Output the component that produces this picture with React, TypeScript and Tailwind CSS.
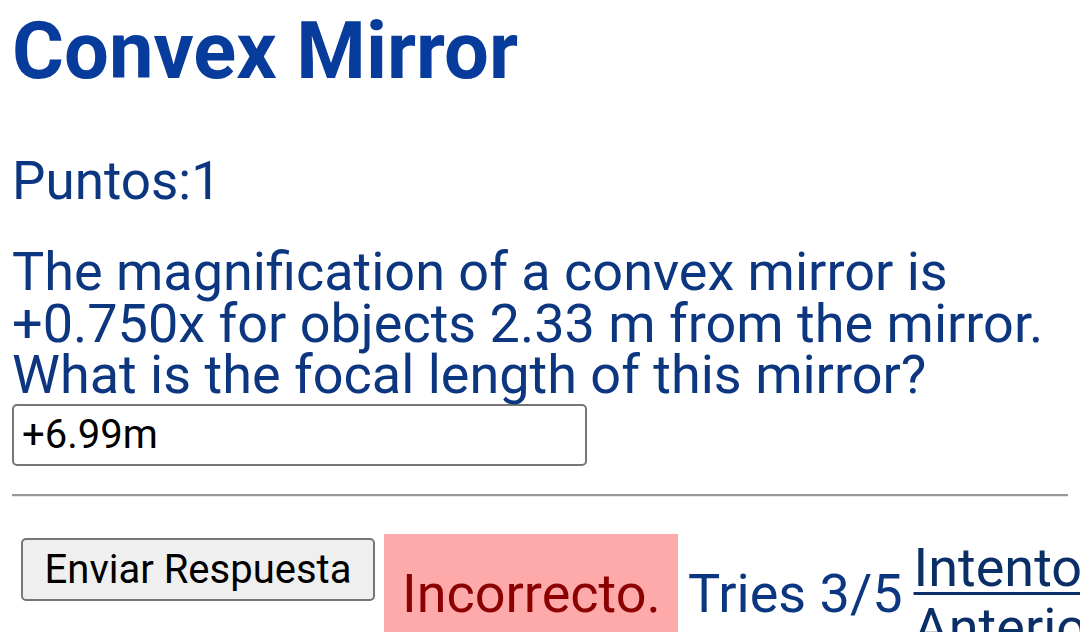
export default function App() {
  return (
    <div className="w-[1080px] h-[632px] overflow-hidden bg-white font-['Roboto',sans-serif]">
      <div className="w-[1056px] ml-3">
        <h1 className="mt-[11px] text-[79.5px] leading-none font-bold text-[#073b9c]">Convex Mirror</h1>
        <p className="mt-[64.5px] text-[53px] leading-none text-[#0c3680]">Puntos:1</p>
        <p className="mt-[38px] text-[54px] leading-[51.5px] text-[#0c3680]">
          The magnification of a convex mirror is
          <br />
          +0.750x for objects 2.33 m from the mirror.
          <br />
          What is the focal length of this mirror?
        </p>
        <input
          type="text"
          defaultValue="+6.99m"
          className="block mt-[3px] w-[575px] h-[62px] px-[8px] border-2 border-[#767676] rounded-[5px] text-[40px] text-black outline-none"
        />
        <div className="mt-[28px] border-t-2 border-t-[#9a9a9a] border-b border-b-[#e6e6e6]" />
        <div className="flex items-start mt-[37px]">
          <button className="shrink-0 ml-[9px] mt-[4px] w-[354px] h-[63px] bg-[#efefef] border-2 border-[#767676] rounded-[5px] text-[40px] text-black">
            Enviar Respuesta
          </button>
          <div className="shrink-0 ml-[9px] w-[294px] h-[160px] bg-[#ffaaaa] pl-[18px] pr-[20px] pt-[33px]">
            <span className="text-[54px] leading-none text-[#8b0000]">Incorrecto.</span>
          </div>
          <span className="shrink-0 ml-[10px] mt-[33px] text-[54px] leading-none text-[#0c3680]">Tries 3/5</span>
          <a href="#" className="shrink-0 ml-[11px] mt-[4px] w-[200px] text-[54px] leading-[60px] text-[#0a2f66] underline underline-offset-[6px] decoration-[3px]">
            Intento Anterior
          </a>
        </div>
      </div>
    </div>
  )
}
